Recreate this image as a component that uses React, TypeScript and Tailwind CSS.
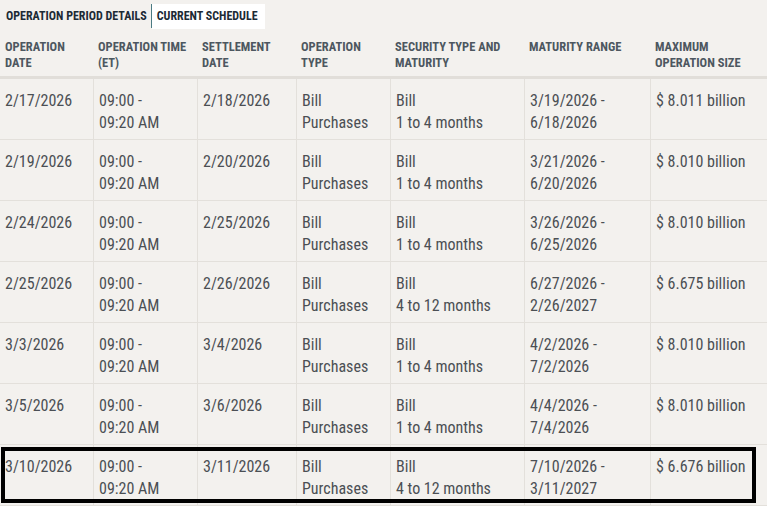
import React from "react";

type Row = {
  date: string;
  time: [string, string];
  settle: string;
  type: [string, string];
  security: [string, string];
  range: [string, string];
  size: string;
};

const ROWS: Row[] = [
  { date: "2/17/2026", time: ["09:00 -", "09:20 AM"], settle: "2/18/2026", type: ["Bill", "Purchases"], security: ["Bill", "1 to 4 months"], range: ["3/19/2026 -", "6/18/2026"], size: "$ 8.011 billion" },
  { date: "2/19/2026", time: ["09:00 -", "09:20 AM"], settle: "2/20/2026", type: ["Bill", "Purchases"], security: ["Bill", "1 to 4 months"], range: ["3/21/2026 -", "6/20/2026"], size: "$ 8.010 billion" },
  { date: "2/24/2026", time: ["09:00 -", "09:20 AM"], settle: "2/25/2026", type: ["Bill", "Purchases"], security: ["Bill", "1 to 4 months"], range: ["3/26/2026 -", "6/25/2026"], size: "$ 8.010 billion" },
  { date: "2/25/2026", time: ["09:00 -", "09:20 AM"], settle: "2/26/2026", type: ["Bill", "Purchases"], security: ["Bill", "4 to 12 months"], range: ["6/27/2026 -", "2/26/2027"], size: "$ 6.675 billion" },
  { date: "3/3/2026", time: ["09:00 -", "09:20 AM"], settle: "3/4/2026", type: ["Bill", "Purchases"], security: ["Bill", "1 to 4 months"], range: ["4/2/2026 -", "7/2/2026"], size: "$ 8.010 billion" },
  { date: "3/5/2026", time: ["09:00 -", "09:20 AM"], settle: "3/6/2026", type: ["Bill", "Purchases"], security: ["Bill", "1 to 4 months"], range: ["4/4/2026 -", "7/4/2026"], size: "$ 8.010 billion" },
  { date: "3/10/2026", time: ["09:00 -", "09:20 AM"], settle: "3/11/2026", type: ["Bill", "Purchases"], security: ["Bill", "4 to 12 months"], range: ["7/10/2026 -", "3/11/2027"], size: "$ 6.676 billion" },
];

const HEADERS = [
  ["OPERATION", "DATE"],
  ["OPERATION TIME", "(ET)"],
  ["SETTLEMENT", "DATE"],
  ["OPERATION", "TYPE"],
  ["SECURITY TYPE AND", "MATURITY"],
  ["MATURITY RANGE"],
  ["MAXIMUM", "OPERATION SIZE"],
];

// column widths: 93 104 99 94 134 126 117
const GRID = "grid grid-cols-[93px_104px_99px_94px_134px_126px_117px]";

function Lines({ lines }: { lines: string[] }) {
  return (
    <>
      {lines.map((l, i) => (
        <div key={i}>{l}</div>
      ))}
    </>
  );
}

export default function App() {
  return (
    <div
      className="relative w-[767px] h-[506px] overflow-hidden bg-[#f3f1ee]"
      style={{ fontFamily: '"Roboto Condensed", Roboto, "Liberation Sans", sans-serif' }}
    >
      {/* tabs */}
      <div className="flex items-center h-[31px] pt-[1px] text-[12px] font-bold text-[#1c2a35]">
        <div className="pl-[6px] pr-[4px]">OPERATION PERIOD DETAILS</div>
        <div className="w-px h-[24px] bg-[#4b7b83]" />
        <div className="bg-white h-[25px] flex items-center pl-[5px] pr-[7px]">CURRENT SCHEDULE</div>
      </div>

      {/* header */}
      <div className={`${GRID} h-[48px] border-b-[3px] border-[#e1ded9] text-[12.5px] leading-[16px] font-bold text-[#4d5760]`}>
        {HEADERS.map((h, i) => (
          <div key={i} className="pl-[5px] pt-[8px]">
            <Lines lines={h} />
          </div>
        ))}
      </div>

      {/* body */}
      <div className="text-[16px] leading-[22px] text-[#4b4f54]">
        {ROWS.map((r, i) => (
          <div key={i} className={`${GRID} h-[61px] border-b border-[#e3e0db]`}>
            <div className="pl-[5px] pt-[11px]">{r.date}</div>
            <div className="pl-[5px] pt-[11px] border-l border-[#e3e0db]"><Lines lines={r.time} /></div>
            <div className="pl-[5px] pt-[11px] border-l border-[#e3e0db]">{r.settle}</div>
            <div className="pl-[5px] pt-[11px] border-l border-[#e3e0db]"><Lines lines={r.type} /></div>
            <div className="pl-[5px] pt-[11px] border-l border-[#e3e0db]"><Lines lines={r.security} /></div>
            <div className="pl-[5px] pt-[11px] border-l border-[#e3e0db]"><Lines lines={r.range} /></div>
            <div className="pl-[5px] pt-[11px] border-l border-[#e3e0db]">{r.size}</div>
          </div>
        ))}
      </div>

      {/* highlight box drawn over the last row */}
      <div className="absolute left-[1px] top-[447px] w-[755px] h-[56px] border-[4px] border-black pointer-events-none" />
    </div>
  );
}
